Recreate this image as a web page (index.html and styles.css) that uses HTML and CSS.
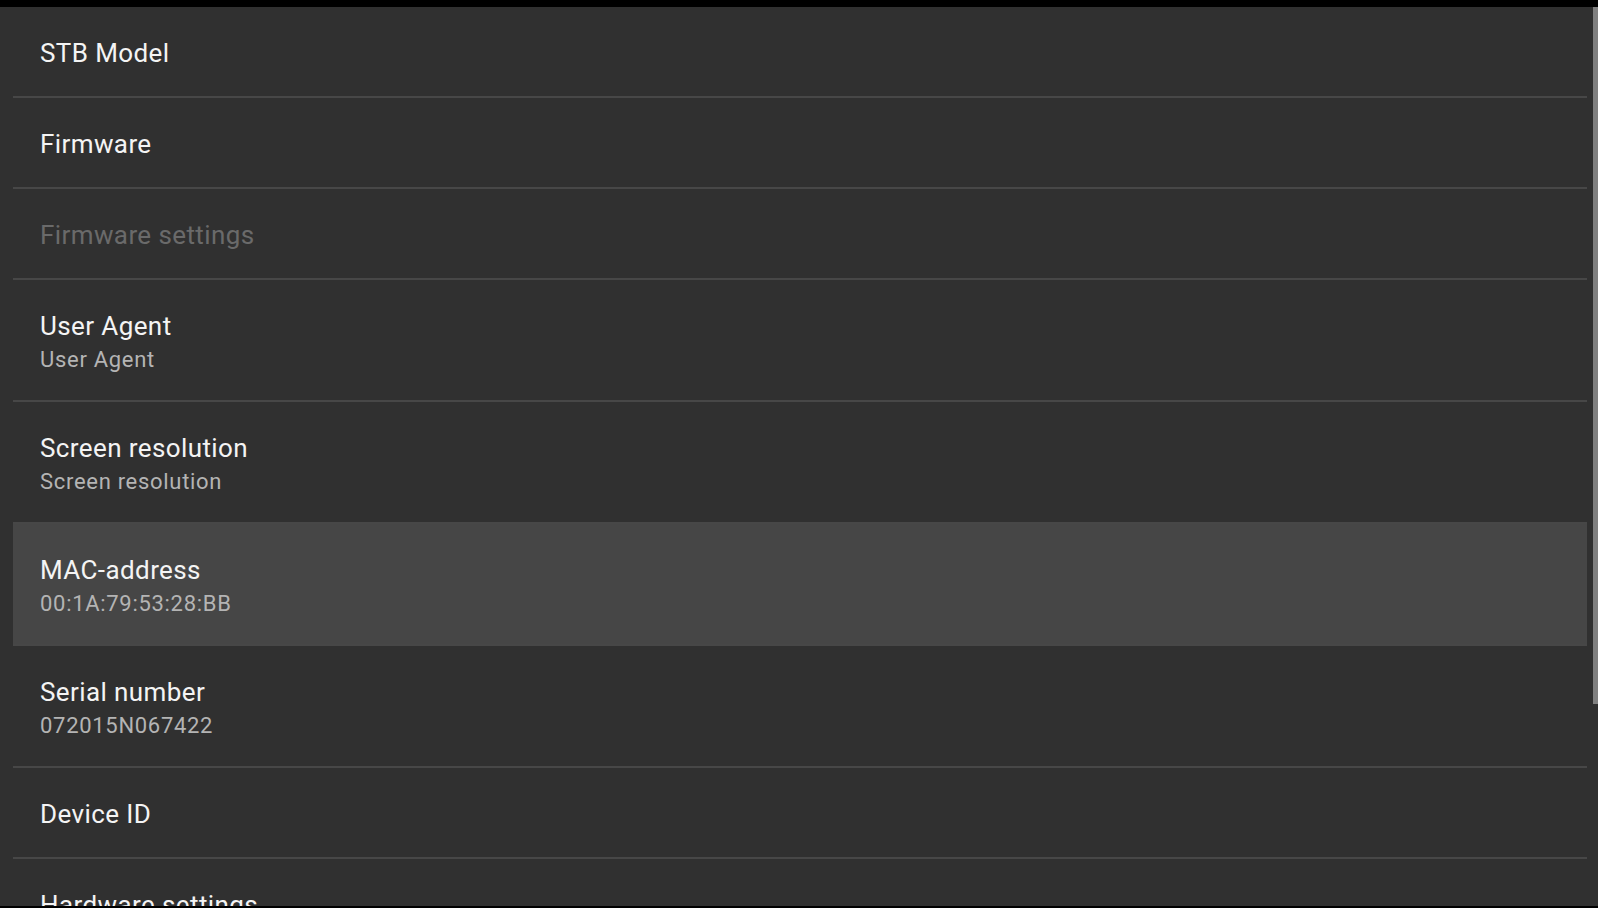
FILE: index.html
```html
<!DOCTYPE html>
<html>
<head>
<meta charset="utf-8">
<link rel="stylesheet" href="styles.css">
</head>
<body>
<div class="screen">
  <div class="panel">
    <ul class="list">
      <li class="item"><div class="title">STB Model</div></li>
      <li class="item"><div class="title">Firmware</div></li>
      <li class="item disabled"><div class="title">Firmware settings</div></li>
      <li class="item"><div class="title">User Agent</div><div class="sub">User Agent</div></li>
      <li class="item"><div class="title">Screen resolution</div><div class="sub">Screen resolution</div></li>
      <li class="item selected"><div class="title">MAC-address</div><div class="sub">00:1A:79:53:28:BB</div></li>
      <li class="item"><div class="title">Serial number</div><div class="sub">072015N067422</div></li>
      <li class="item"><div class="title">Device ID</div></li>
      <li class="item"><div class="title">Hardware settings</div></li>
    </ul>
    <div class="scrollbar"></div>
  </div>
</div>
</body>
</html>
```
FILE: styles.css
```css
html, body {
  margin: 0;
  padding: 0;
  background: #000;
}
.screen {
  width: 1598px;
  height: 908px;
  padding-top: 7px;
  padding-bottom: 2px;
  box-sizing: border-box;
  background: #000;
  overflow: hidden;
}
.panel {
  position: relative;
  height: 899px;
  background: #303030;
  overflow: hidden;
  padding: 0 11px 0 13px;
}
.list {
  list-style: none;
  margin: 0;
  padding: 0;
  font-family: Roboto, "Noto Sans", sans-serif;
}
.item {
  padding: 31px 0 28px 27px;
  border-bottom: 2px solid #474747;
}
.title {
  font-size: 26px;
  line-height: 30px;
  letter-spacing: 0.4px;
  color: #f4f4f4;
}
.sub {
  margin-top: 7px;
  font-size: 22px;
  line-height: 24px;
  letter-spacing: 0.7px;
  color: #b4b4b4;
}
.disabled .title {
  color: #6a6a6a;
}
.selected {
  background: #464646;
}
.scrollbar {
  position: absolute;
  top: 0;
  right: 0;
  width: 5px;
  height: 697px;
  background: #808080;
}
```
